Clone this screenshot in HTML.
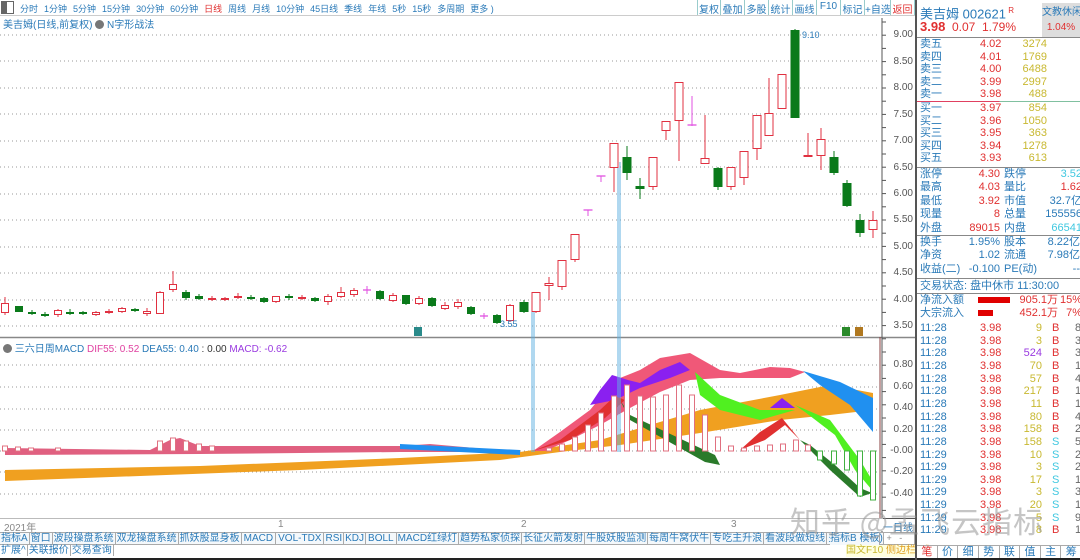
<!DOCTYPE html>
<html><head><meta charset="utf-8">
<style>
*{margin:0;padding:0;box-sizing:border-box}
body{width:1080px;height:560px;overflow:hidden;background:#fff;font-family:"Liberation Sans","Noto Sans CJK SC",sans-serif;font-size:10px;color:#2a7ab8;position:relative}
.abs{position:absolute;white-space:nowrap}
#tb{position:absolute;left:0;top:0;width:915px;height:16px;border-bottom:1px solid #ccc;white-space:nowrap;overflow:hidden}
#tb .m span{margin-right:6px}
.btn{position:absolute;top:0;height:15px;border-left:1px solid #9cc;padding:1px 0;font-size:10px;color:#2a7ab8;text-align:center;white-space:nowrap}
#rp{position:absolute;left:915px;top:0;width:165px;height:560px;border-left:2px solid #555;font-size:11px}
.row{position:absolute;left:3px;width:162px;height:13px;line-height:13px}
.row span{position:absolute}
.r{color:#e03030}.y{color:#c8b830}.b{color:#2a7ab8}.c{color:#40c8e0}.pu{color:#9a3ae0}
.sep{position:absolute;left:0;width:165px;height:1px;background:#888}
.ax{position:absolute;left:885px;width:28px;text-align:right;font-size:10px;color:#555}
</style></head><body>
<div id="tb">
<div class="abs" style="left:1px;top:1px;width:13px;height:13px;border:1px solid #666;background:#fff"><div style="width:5px;height:11px;background:#666"></div></div>
<div class="abs m" style="left:20px;top:2px;font-size:9px"><span>分时</span><span>1分钟</span><span>5分钟</span><span>15分钟</span><span>30分钟</span><span>60分钟</span><span style="color:#e03030">日线</span><span>周线</span><span>月线</span><span>10分钟</span><span>45日线</span><span>季线</span><span>年线</span><span>5秒</span><span>15秒</span><span>多周期</span><span>更多 )</span></div>
<div class="btn" style="left:697px;width:23px">复权</div><div class="btn" style="left:720px;width:24px">叠加</div><div class="btn" style="left:744px;width:24px">多股</div><div class="btn" style="left:768px;width:24px">统计</div><div class="btn" style="left:792px;width:24px">画线</div><div class="btn" style="left:816px;width:24px">F10</div><div class="btn" style="left:840px;width:24px">标记</div><div class="btn" style="left:864px;width:26px">+自选</div><div class="btn" style="left:890px;width:25px;color:#e03030;border-right:1px solid #9cc">返回</div>
</div>
<div class="abs" style="left:3px;top:16px">美吉姆(日线,前复权) <span style="display:inline-block;width:9px;height:9px;border-radius:50%;background:#777;vertical-align:-1px"></span> N字形战法</div>
<div class="abs" style="left:3px;top:340px"><span style="display:inline-block;width:9px;height:9px;border-radius:50%;background:#777;vertical-align:-1px"></span> 三六日周MACD <span style="color:#e040a0">DIF55: 0.52</span> <span>DEA55: 0.40</span> <span style="color:#333">: 0.00</span> <span class="pu">MACD: -0.62</span></div>

<svg id="ch" class="abs" style="left:0;top:0" width="915" height="560"></svg>

<div class="ax" style="top:29px">9.00</div><div class="ax" style="top:56px">8.50</div><div class="ax" style="top:82px">8.00</div><div class="ax" style="top:109px">7.50</div><div class="ax" style="top:135px">7.00</div><div class="ax" style="top:162px">6.50</div><div class="ax" style="top:188px">6.00</div><div class="ax" style="top:214px">5.50</div><div class="ax" style="top:241px">5.00</div><div class="ax" style="top:267px">4.50</div><div class="ax" style="top:294px">4.00</div><div class="ax" style="top:320px">3.50</div>
<div class="ax" style="top:359px">0.80</div><div class="ax" style="top:381px">0.60</div><div class="ax" style="top:402px">0.40</div><div class="ax" style="top:424px">0.20</div><div class="ax" style="top:445px">-0.00</div><div class="ax" style="top:466px">-0.20</div><div class="ax" style="top:488px">-0.40</div>
<div class="abs" style="left:883px;top:518px;width:32px;font-size:10px;color:#2a7ab8;border-top:1px solid #555">一日线</div>
<div class="abs" style="left:883px;top:532px;width:32px;height:13px;border:1px solid #aaa;font-size:9px;color:#888">&nbsp;+ &nbsp;&nbsp;-</div>

<div class="abs" style="left:0;top:518px;width:883px;height:13px;border-top:1px solid #bbb;background:#fff;color:#888;font-size:10px"><span style="position:absolute;left:4px">2021年</span><span style="position:absolute;left:278px">1</span><span style="position:absolute;left:521px">2</span><span style="position:absolute;left:731px">3</span></div>
<div class="abs" style="left:0;top:532px;width:883px;height:13px;border-top:1px solid #aaa;border-bottom:1px solid #aaa;font-size:10px;line-height:12px;background:#f4f8fb">
<span style="border-right:1px solid #aaa;padding:0 1px">指标A</span><span style="border-right:1px solid #aaa;padding:0 1px">窗口</span><span style="border-right:1px solid #aaa;padding:0 1px">波段操盘系统</span><span style="border-right:1px solid #aaa;padding:0 1px">双龙操盘系统</span><span style="border-right:1px solid #aaa;padding:0 1px">抓妖股显身板</span><span style="border-right:1px solid #aaa;padding:0 2px">MACD</span><span style="border-right:1px solid #aaa;padding:0 2px">VOL-TDX</span><span style="border-right:1px solid #aaa;padding:0 1px">RSI</span><span style="border-right:1px solid #aaa;padding:0 1px">KDJ</span><span style="border-right:1px solid #aaa;padding:0 2px">BOLL</span><span style="border-right:1px solid #aaa;padding:0 1px">MACD红绿灯</span><span style="border-right:1px solid #aaa;padding:0 1px">趋势私家侦探</span><span style="border-right:1px solid #aaa;padding:0 1px">长征火箭发射</span><span style="border-right:1px solid #aaa;padding:0 1px">牛股妖股监测</span><span style="border-right:1px solid #aaa;padding:0 1px">每周牛窝伏牛</span><span style="border-right:1px solid #aaa;padding:0 1px">专吃主升浪</span><span style="border-right:1px solid #aaa;padding:0 1px">看波段做短线</span><span style="border-right:1px solid #aaa;padding:0 1px">多周KDRM</span><span>)</span>
<span style="position:absolute;left:830px;top:0;background:#f4f8fb">指标B 模板</span></div>
<div class="abs" style="left:0;top:545px;width:915px;height:13px;font-size:10px;line-height:12px"><span style="border-right:1px solid #aaa;padding:0 1px">扩展^</span><span style="border-right:1px solid #aaa;padding:0 1px">关联报价</span><span style="border-right:1px solid #aaa;padding:0 1px">交易查询</span><span style="position:absolute;left:846px;color:#c8b830;background:#ffffe0">国文F10 <span style="color:#e0a020">侧边栏 《</span></span></div>
<div class="abs" style="left:0;top:558px;width:1080px;height:2px;background:#222"></div>

<div id="rp">
<div class="row" style="top:3px;font-size:13px;height:16px;line-height:16px">美吉姆 002621<sup class="r" style="font-size:8px"> R</sup></div>
<div class="row r" style="top:19px;font-size:12px;height:16px;line-height:16px"><b style="font-size:13px">3.98</b>&nbsp; 0.07 &nbsp;1.79%</div>
<div class="abs" style="left:125px;top:3px;width:38px;height:34px;background:#ddd;text-align:center;font-size:10px;line-height:15px;padding-top:2px">文教休闲<br><span class="r">1.04%</span></div>
<div class="sep" style="top:37px"></div>
<div id="rows"></div>
</div>

<div class="abs" style="left:790px;top:498px;font-size:30px;color:rgba(150,150,150,0.55);font-family:'Noto Sans CJK SC',sans-serif;letter-spacing:1px">知乎 @孟飞云指标</div>

<script>
var s='';
var gy=[35,61,88,114,141,167,194,220,247,273,300,326];
gy.forEach(function(y){s+='<line x1="0" y1="'+y+'" x2="880" y2="'+y+'" stroke="#999" stroke-dasharray="1,3"/>';});
[365,387,409,430,451,472,494].forEach(function(y){s+='<line x1="0" y1="'+y+'" x2="880" y2="'+y+'" stroke="#999" stroke-dasharray="1,3"/>';});
s+='<line x1="0" y1="337.5" x2="915" y2="337.5" stroke="#888" stroke-width="1.5"/>';
s+='<line x1="882" y1="18" x2="882" y2="532" stroke="#555"/>';
for(var y=22;y<515;y+=13.2){s+='<line x1="882" y1="'+y+'" x2="886" y2="'+y+'" stroke="#555"/>';}
s+='<line x1="880" y1="337" x2="880" y2="518" stroke="#8a4040"/>';
function P(pts,c){s+='<polygon points="'+pts+'" fill="'+c+'"/>';}
P('5,470 200,466 400,458 520,452 600,440 700,410 780,395 830,385 873,393 873,410 830,415 780,420 700,433 620,445 560,452 500,460 300,470 5,481','#f0a020');
P('533,451 560,432 590,410 615,380 640,370 660,358 690,353 720,370 740,373 770,367 790,368 805,372 790,378 720,378 690,380 660,392 630,408 600,425 570,440 545,451','#f05878');
P('590,405 600,390 612,375 628,380 640,383 660,370 680,362 690,370 670,378 640,388 615,400','#8a20f0');
P('770,408 782,398 795,408','#8a20f0');
P('803,371 840,382 873,398 873,432 850,405 820,385','#2090f0');
P('695,372 720,395 760,410 795,410 760,420 720,410 700,395','#50f020');
P('795,405 830,420 860,460 872,480 872,490 855,470 835,435 805,412','#50f020');
P('620,400 630,415 715,455 720,465 705,462 630,420','#2a7a2a');
P('800,440 830,470 860,497 872,493 860,488 835,465 810,445','#2a7a2a');
P('533,451 560,440 600,410 615,396 625,400 605,418 570,440','#e03030');
P('740,450 760,432 782,418 800,440 785,425 765,440','#e03030');
P('5,448 150,450 170,440 180,438 200,446 400,446 430,444 520,452 400,452 200,454 5,455','#e06080');
P('400,444 520,450 520,455 400,449','#2090f0');
var pb=[[5,446],[18,447],[31,448],[58,448],[160,441],[173,438],[186,441],[199,444],[212,446],[549,448],[562,444],[575,437],[588,425],[601,413],[614,396],[627,385],[640,396],[653,397],[666,395],[679,385],[692,395],[705,415],[718,437],[731,446],[744,448],[757,446],[770,445],[783,444],[796,440],[808,445]];
pb.forEach(function(b){s+='<rect x="'+(b[0]-2.5)+'" y="'+b[1]+'" width="5" height="'+(451-b[1])+'" fill="#fff" stroke="#e07080" stroke-width="1"/>';});
var nb=[[820,460],[834,464],[847,470],[860,496],[873,500]];
nb.forEach(function(b){s+='<rect x="'+(b[0]-2.5)+'" y="451" width="5" height="'+(b[1]-451)+'" fill="#fff" stroke="#40b040" stroke-width="1"/>';});
s+='<line x1="532" y1="312" x2="532" y2="452" stroke="#60b0e0"/><line x1="534" y1="312" x2="534" y2="452" stroke="#60b0e0"/>';
s+='<line x1="618" y1="162" x2="618" y2="452" stroke="#60b0e0"/><line x1="620" y1="162" x2="620" y2="452" stroke="#60b0e0"/>';
var C=[[5,303,313,297,315,'r'],[19,306,312,306,312,'g'],[32,312,313,310,315,'g'],[45,314,315,312,317,'g'],[58,310,315,309,317,'r'],[70,312,313,309,315,'g'],[83,312,314,311,315,'g'],[96,312,315,311,316,'r'],[109,311,313,309,314,'r'],[122,308,312,307,313,'r'],[135,309,311,308,312,'g'],[147,311,314,308,316,'r'],[160,292,314,291,314,'r'],[173,284,290,271,292,'r'],[186,292,298,290,300,'g'],[199,296,299,294,300,'g'],[212,298,300,296,301,'r'],[225,298,300,297,301,'r'],[238,296,298,293,299,'r'],[251,297,299,295,300,'g'],[264,298,302,297,303,'g'],[276,296,302,296,303,'r'],[289,296,298,294,300,'g'],[302,297,299,295,300,'r'],[315,298,301,297,302,'g'],[328,296,302,294,305,'r'],[341,292,297,287,298,'r'],[354,290,295,288,297,'r'],[367,290,291,286,294,'p'],[380,291,299,290,300,'g'],[393,295,301,293,302,'r'],[406,295,304,295,305,'g'],[419,298,304,296,305,'r'],[432,298,306,297,307,'g'],[445,305,309,302,310,'r'],[458,302,307,299,309,'r'],[471,307,314,306,315,'g'],[484,316,317,313,319,'p'],[497,315,323,314,324,'g'],[510,305,321,304,322,'r'],[524,302,312,300,313,'g'],[536,292,312,292,313,'r'],[549,283,286,277,300,'r'],[562,260,287,260,290,'r'],[575,234,260,234,262,'r'],[588,210,211,210,216,'p'],[601,176,177,176,182,'p'],[614,143,168,143,192,'r'],[627,157,173,146,180,'g'],[640,186,189,178,199,'g'],[653,157,187,157,190,'r'],[666,121,131,121,140,'r'],[679,82,121,82,161,'r'],[692,125,126,96,126,'p'],[705,158,164,115,164,'r'],[718,168,187,167,190,'g'],[731,167,187,167,190,'r'],[744,151,178,151,185,'r'],[757,115,149,115,160,'r'],[769,113,136,78,136,'r'],[782,74,109,74,109,'r'],[795,30,118,29,118,'g'],[808,156,157,133,157,'R'],[821,139,156,128,170,'r'],[834,157,173,151,175,'g'],[847,183,206,180,207,'g'],[860,220,233,214,237,'g'],[873,220,230,211,238,'r']];
C.forEach(function(c){var x=c[0],w=(x>=520?9:8),col=c[5]=='g'?'#0a7a1a':(c[5]=='p'?'#e050e0':'#e03040');
 s+='<line x1="'+x+'" y1="'+c[3]+'" x2="'+x+'" y2="'+c[4]+'" stroke="'+col+'"/>';
 if(c[5]=='g') s+='<rect x="'+(x-w/2)+'" y="'+c[1]+'" width="'+w+'" height="'+Math.max(2,c[2]-c[1])+'" fill="'+col+'"/>';
 else if(c[5]=='p'||c[5]=='R') s+='<line x1="'+(x-w/2)+'" y1="'+c[1]+'" x2="'+(x+w/2)+'" y2="'+c[1]+'" stroke="'+col+'" stroke-width="'+(c[5]=='R'?2:1.3)+'"/>';
 else s+='<rect x="'+(x-w/2+0.5)+'" y="'+(c[1]+0.5)+'" width="'+(w-1)+'" height="'+Math.max(1,c[2]-c[1]-1)+'" fill="#fff" stroke="'+col+'"/>';
});
s+='<text x="802" y="38" fill="#2a7ab8" font-size="9">9.10</text><text x="500" y="327" fill="#2a7ab8" font-size="9">3.55</text>';
s+='<rect x="414" y="327" width="8" height="9" fill="#2a8a8a"/><rect x="842" y="327" width="8" height="9" fill="#2a8a2a"/><rect x="855" y="327" width="8" height="9" fill="#b07820"/>';
document.getElementById('ch').innerHTML=s;

var h='',rh=12.6;
var sell=[['卖五','4.02','3274'],['卖四','4.01','1769'],['卖三','4.00','6488'],['卖二','3.99','2997'],['卖一','3.98','488']];
var buy=[['买一','3.97','854'],['买二','3.96','1050'],['买三','3.95','363'],['买四','3.94','1278'],['买五','3.93','613']];
function rw(y,a){h+='<div class="row" style="top:'+y+'px">'+a+'</div>';}
sell.forEach(function(r,i){rw(38+i*rh,'<span class="b">'+r[0]+'</span><span class="r" style="left:60px">'+r[1]+'</span><span class="y" style="right:35px">'+r[2]+'</span>');});
h+='<div class="sep" style="top:101px;background:linear-gradient(90deg,#e04060 50%,#80c0a0 50%)"></div>';
buy.forEach(function(r,i){rw(102+i*rh,'<span class="b">'+r[0]+'</span><span class="r" style="left:60px">'+r[1]+'</span><span class="y" style="right:35px">'+r[2]+'</span>');});
h+='<div class="sep" style="top:167px"></div>';
var st=[['涨停','4.30','r','跌停','3.52','c'],['最高','4.03','r','量比','1.62','r'],['最低','3.92','r','市值','32.7亿','b'],['现量','8','r','总量','155556','b'],['外盘','89015','r','内盘','66541','c']];
st.forEach(function(r,i){rw(168+i*13.4,'<span class="b">'+r[0]+'</span><span class="'+r[2]+'" style="right:82px">'+r[1]+'</span><span class="b" style="left:84px">'+r[3]+'</span><span class="'+r[5]+'" style="right:0">'+r[4]+'</span>');});
h+='<div class="sep" style="top:235px"></div>';
var st2=[['换手','1.95%','股本','8.22亿'],['净资','1.02','流通','7.98亿'],['收益(二)','-0.100','PE(动)','--']];
st2.forEach(function(r,i){rw(236+i*13.4,'<span class="b">'+r[0]+'</span><span class="b" style="right:82px">'+r[1]+'</span><span class="b" style="left:84px">'+r[2]+'</span><span class="b" style="right:2px">'+r[3]+'</span>');});
h+='<div class="sep" style="top:278px"></div>';
rw(280,'<span class="b">交易状态: 盘中休市 11:30:00</span>');
h+='<div class="sep" style="top:293px"></div>';
rw(294,'<span class="b">净流入额</span><span style="left:58px;top:3px;width:32px;height:6px;background:#e00000"></span><span class="r" style="right:24px">905.1万</span><span class="r" style="right:0">15%</span>');
rw(307,'<span class="b">大宗流入</span><span style="left:58px;top:3px;width:15px;height:6px;background:#e00000"></span><span class="r" style="right:24px">452.1万</span><span class="r" style="right:0">7%</span>');
var tk=[['11:28','9','y','B','r','8'],['11:28','3','y','B','r','3'],['11:28','524','pu','B','r','34'],['11:28','70','y','B','r','11'],['11:28','57','y','B','r','4'],['11:28','217','y','B','r','13'],['11:28','11','y','B','r','1'],['11:28','80','y','B','r','4'],['11:28','158','y','B','r','20'],['11:28','158','y','S','c','51'],['11:29','10','y','S','c','2'],['11:29','3','y','S','c','2'],['11:29','17','y','S','c','13'],['11:29','3','y','S','c','3'],['11:29','20','y','S','c','17'],['11:29','5','y','S','c','9'],['11:29','8','y','B','r','1']];
tk.forEach(function(r,i){rw(322+i*12.65,'<span class="b">'+r[0]+'</span><span class="r" style="left:60px">3.98</span><span class="'+r[2]+'" style="right:40px">'+r[1]+'</span><span class="'+r[4]+'" style="left:132px">'+r[3]+'</span><span style="left:155px;color:#666">'+r[5]+'</span>');});
var tabs=['笔','价','细','势','联','值','主','筹'];
h+='<div style="position:absolute;left:0;top:545px;width:165px;height:13px;border-top:1px solid #aaa;display:flex;font-size:11px;line-height:12px;background:#fff">';
tabs.forEach(function(t,i){h+='<div style="flex:1;text-align:center;border-right:1px solid #aaa;color:'+(i==0?'#e03030':'#2a7ab8')+'">'+t+'</div>';});
h+='</div>';
document.getElementById('rows').innerHTML=h;
</script>
</body></html>
